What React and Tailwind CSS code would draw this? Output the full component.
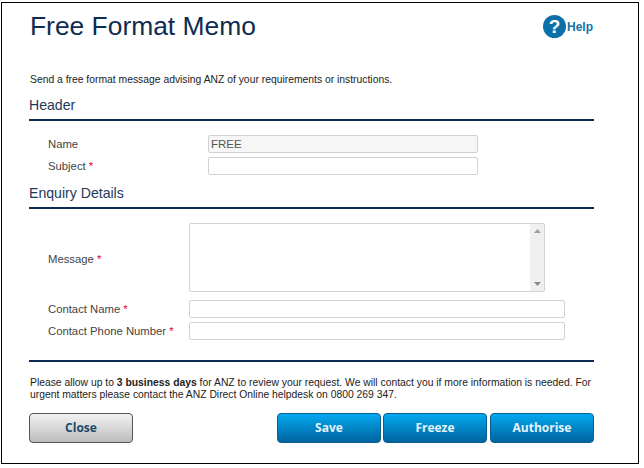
const font = { fontFamily: '"Liberation Sans", Arial, sans-serif' };

function Req() {
  return <span className="text-[#e2003a]"> *</span>;
}

function Row({ label, required, labelW, inputW, value, disabled, className = "" }) {
  return (
    <div className={`flex items-center ${className}`}>
      <label className={`pl-[19px] text-[11.3px] text-[#444] ${labelW}`}>
        {label}
        {required && <Req />}
      </label>
      <input
        readOnly
        value={value || ""}
        className={`h-[18px] rounded-[2px] border border-[#d2d2d2] px-[2px] text-[11.5px] text-[#555] outline-none ${inputW} ${disabled ? "bg-[#f6f6f6]" : "bg-white"}`}
      />
    </div>
  );
}

function Section({ title, className = "" }) {
  return (
    <div className={className}>
      <h2 className="text-[14.1px] leading-[18px] font-normal text-[#1d3a5c]">{title}</h2>
      <div className="mt-[5px] h-[2px] bg-[#0d2a55]" />
    </div>
  );
}

function Btn({ children, grey, className = "" }) {
  const tone = grey
    ? "border-[#555] bg-gradient-to-b from-[#f2f2f2] to-[#bdbdbd] text-[#1b4a6b]"
    : "border-[#0a5f92] bg-gradient-to-b from-[#03a9f0] to-[#00649f] text-[#e4f3fb]";
  return (
    <button
      className={`h-[30px] w-[104px] rounded-[4px] border text-[12px] font-bold ${tone} ${className}`}
      style={{ fontFamily: '"Open Sans", sans-serif' }}
    >
      {children}
    </button>
  );
}

export default function App() {
  return (
    <div className="h-[468px] w-[644px] bg-white pt-[2px] pl-[1px]" style={font}>
      <div className="h-[462px] w-[638px] border border-black pt-[7px] pl-[27px]">
        <div className="flex w-[565px] items-start justify-between">
          <h1 className="pl-[1px] text-[26.4px] leading-[32px] font-normal text-[#0f2c50]">Free Format Memo</h1>
          <a className="mt-[5px] mr-[1px] flex items-center text-[12px] font-bold text-[#1272a8]">
            <svg width="23" height="23" viewBox="0 0 23 23">
              <circle cx="11.5" cy="11.5" r="11.5" fill="#0b6fa8" />
              <text x="11.5" y="18" textAnchor="middle" fontSize="19" fontWeight="700" fill="#fff" fontFamily="Liberation Sans">?</text>
            </svg>
            <span className="ml-[1px]">Help</span>
          </a>
        </div>

        <div className="w-[565px]">
          <p className="mt-[32px] pl-[1px] text-[10.35px] leading-[12px] text-[#222]">
            Send a free format message advising ANZ of your requirements or instructions.
          </p>
          <Section title="Header" className="mt-[10px]" />
          <Row className="mt-[14px]" label="Name" labelW="w-[179px]" inputW="w-[270px]" value="FREE" disabled />
          <Row className="mt-[4px]" label="Subject" required labelW="w-[179px]" inputW="w-[270px]" />
          <Section title="Enquiry Details" className="mt-[9px]" />

          <div className="mt-[14px] flex items-center">
            <label className="w-[160px] pt-[3px] pl-[19px] text-[11.3px] text-[#444]">
              Message
              <Req />
            </label>
            <div className="flex h-[69px] w-[356px] rounded-[2px] border border-[#d2d2d2] bg-white">
              <div className="flex-1" />
              <div className="flex w-[14px] flex-col items-center justify-between bg-[#f0f0f0] py-[5px]">
                <svg width="7" height="4" viewBox="0 0 7 4"><path d="M3.5 0 7 4H0z" fill="#a0a0a0" /></svg>
                <svg width="7" height="4" viewBox="0 0 7 4"><path d="M0 0h7L3.5 4z" fill="#8a8a8a" /></svg>
              </div>
            </div>
          </div>

          <Row className="mt-[8px]" label="Contact Name" required labelW="w-[160px]" inputW="w-[376px]" />
          <Row className="mt-[4px]" label="Contact Phone Number" required labelW="w-[160px]" inputW="w-[376px]" />

          <div className="mt-[20px] h-[2px] bg-[#0d2a55]" />
          <p className="mt-[15px] pl-[1px] text-[10.35px] leading-[12px] text-[#222]">
            Please allow up to <b>3 business days</b> for ANZ to review your request. We will contact you if more information is needed. For urgent matters please contact the ANZ Direct Online helpdesk on 0800 269 347.
          </p>
          <div className="mt-[12px] flex">
            <Btn grey>Close</Btn>
            <div className="ml-auto flex gap-[2px]">
              <Btn>Save</Btn>
              <Btn>Freeze</Btn>
              <Btn className="ml-[1px]">Authorise</Btn>
            </div>
          </div>
        </div>
      </div>
    </div>
  );
}
